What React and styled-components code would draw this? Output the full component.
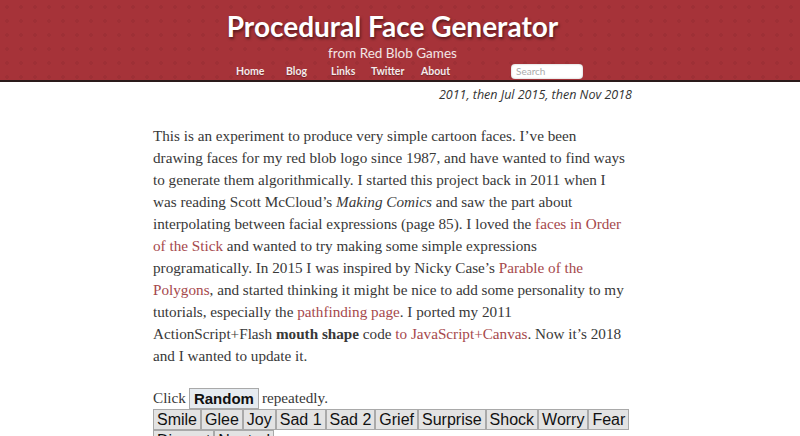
import styled, { createGlobalStyle } from 'styled-components';

const Global = createGlobalStyle`
  body {
    margin: 0;
    background: #fff;
    font-family: 'Liberation Serif', serif;
  }
`;

const Header = styled.header`
  background-color: #a63339;
  background-image: radial-gradient(rgba(0, 0, 0, 0.05) 20%, transparent 21%);
  background-size: 14px 14px;
  border-bottom: 2px solid #2a1a1a;
  height: 80px;
  padding-right: 15px;
  display: flex;
  flex-direction: column;
  align-items: center;
  font-family: Lato, sans-serif;
  color: #fff;
`;

const Title = styled.h1`
  margin: 9px 0 0;
  font-size: 28px;
  font-weight: 700;
  line-height: 34px;
  text-shadow: 1px 2px 3px rgba(0, 0, 0, 0.5);
`;

const Subtitle = styled.div`
  font-size: 13.5px;
  line-height: 18px;
  margin-top: 1px;
  color: #f3e6e6;
`;

const Nav = styled.nav`
  display: flex;
  align-items: center;
  height: 23px;
  margin-left: 34px;
`;

const NavLink = styled.a`
  width: ${(p) => p.$w}px;
  font-size: 10.5px;
  font-weight: 700;
  color: #f5eaea;
  text-decoration: none;
  text-shadow: 0 1px 1px rgba(0, 0, 0, 0.3);
`;

const Search = styled.input`
  width: 72px;
  height: 15px;
  box-sizing: border-box;
  border: none;
  border-radius: 4px;
  background: #fff;
  font-family: Lato, sans-serif;
  font-size: 10px;
  padding: 0 5px;
  box-shadow: inset 0 0 2px rgba(0, 0, 0, 0.3);
  &::placeholder {
    color: #aaa;
  }
`;

const Main = styled.main`
  width: 480px;
  margin: 0 auto;
  padding-right: 14px;
  color: #383838;
  font-size: 15.2px;
  line-height: 22px;
`;

const DateLine = styled.div`
  text-align: right;
  font-family: 'Open Sans', sans-serif;
  font-style: italic;
  font-size: 12.5px;
  color: #333;
  margin: 3px 1px 0 0;
  line-height: 20px;
`;

const Para = styled.p`
  margin: 20px 0;
  white-space: nowrap;
`;

const Link = styled.a`
  color: #a6484c;
  text-decoration: none;
`;

const ClickLine = styled.div`
  display: flex;
  align-items: center;
  gap: 3px;
  height: 22px;
`;

const Btn = styled.button`
  font-family: 'Liberation Sans', Arial, sans-serif;
  font-size: ${(p) => (p.$bold ? 15 : 16)}px;
  font-weight: ${(p) => (p.$bold ? 700 : 400)};
  color: #111;
  background: ${(p) => (p.$bold ? '#e6ebf0' : '#e3e3e3')};
  border: 1px solid #a9a9a9;
  border-radius: 0;
  padding: 0 ${(p) => (p.$bold ? 4 : 3)}px;
  height: 21px;
  line-height: 19px;
  margin: 0;
`;

const Grid = styled.div`
  display: flex;
  flex-wrap: wrap;
  width: 486px;
`;

const faces = ['Smile', 'Glee', 'Joy', 'Sad 1', 'Sad 2', 'Grief', 'Surprise', 'Shock', 'Worry', 'Fear', 'Disgust', 'Neutral'];

export default function App() {
  return (
    <>
      <Global />
      <Header>
        <Title>Procedural Face Generator</Title>
        <Subtitle>from Red Blob Games</Subtitle>
        <Nav>
          <NavLink $w={50}>Home</NavLink>
          <NavLink $w={45}>Blog</NavLink>
          <NavLink $w={40}>Links</NavLink>
          <NavLink $w={50}>Twitter</NavLink>
          <NavLink $w={90}>About</NavLink>
          <Search placeholder="Search" />
        </Nav>
      </Header>
      <Main>
        <DateLine>2011, then Jul 2015, then Nov 2018</DateLine>
        <Para>
          This is an experiment to produce very simple cartoon faces. I’ve been
          <br />
          drawing faces for my red blob logo since 1987, and have wanted to find ways
          <br />
          to generate them algorithmically. I started this project back in 2011 when I
          <br />
          was reading Scott McCloud’s <i>Making Comics</i> and saw the part about
          <br />
          interpolating between facial expressions (page 85). I loved the <Link>faces in Order</Link>
          <br />
          <Link>of the Stick</Link> and wanted to try making some simple expressions
          <br />
          programatically. In 2015 I was inspired by Nicky Case’s <Link>Parable of the</Link>
          <br />
          <Link>Polygons</Link>, and started thinking it might be nice to add some personality to my
          <br />
          tutorials, especially the <Link>pathfinding page</Link>. I ported my 2011
          <br />
          ActionScript+Flash <b>mouth shape</b> code <Link>to JavaScript+Canvas</Link>. Now it’s 2018
          <br />
          and I wanted to update it.
        </Para>
        <ClickLine>
          Click <Btn $bold>Random</Btn> repeatedly.
        </ClickLine>
        <Grid>
          {faces.map((f) => (
            <Btn key={f}>{f}</Btn>
          ))}
        </Grid>
      </Main>
    </>
  );
}
